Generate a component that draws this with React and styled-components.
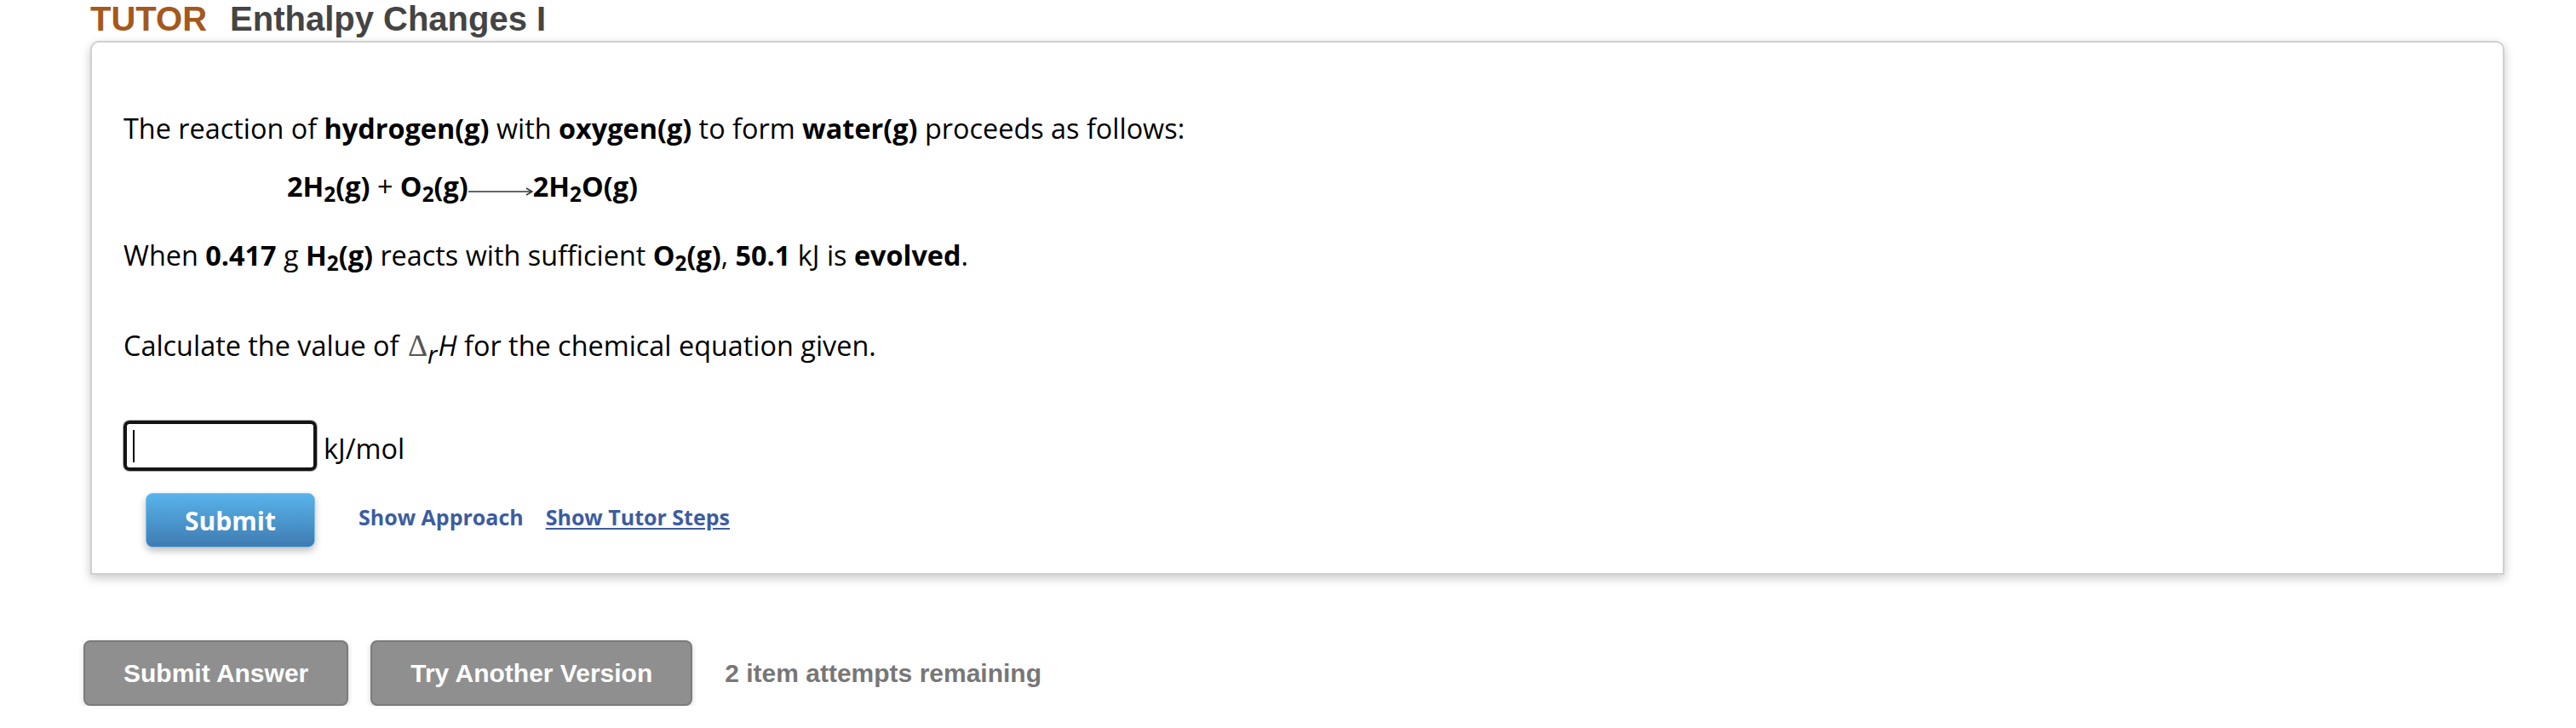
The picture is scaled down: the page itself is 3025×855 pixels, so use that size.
import React from 'react';
import styled, { createGlobalStyle } from 'styled-components';

const GlobalStyle = createGlobalStyle`
  html, body {
    margin: 0;
    padding: 0;
    background: #ffffff;
  }
  body {
    font-family: 'Open Sans', 'Liberation Sans', sans-serif;
    color: #000;
  }
`;

const Page = styled.div`
  padding: 0 84px 0 98px;
`;

const Title = styled.h1`
  margin: 0 0 3px 8px;
  font-family: 'Liberation Sans', Arial, sans-serif;
  font-size: 40px;
  line-height: 45px;
  font-weight: 700;
  color: #444444;
`;

const TitleTag = styled.span`
  color: #a5581c;
  margin-right: 27px;
`;

const Card = styled.section`
  margin-left: 8px;
  border: 2px solid #d0d0d0;
  border-radius: 10px 10px 0 0;
  background: #fff;
  box-shadow: 0 4px 12px rgba(0, 0, 0, 0.22);
  padding: 76px 40px 30px 37px;
`;

const Para = styled.p`
  margin: 0 0 ${p => p.$after || 0}px 0;
  font-size: 32.4px;
  line-height: 48px;
  white-space: nowrap;

  b {
    font-weight: 700;
  }

  sub {
    font-size: 0.75em;
    line-height: 0;
    vertical-align: baseline;
    position: relative;
    top: 0.26em;
  }
`;

const Equation = styled(Para)`
  padding-left: 192px;
  font-weight: 700;
`;

const Plus = styled.span`
  font-weight: 400;
`;

const Arrow = styled.svg`
  width: 76px;
  height: 14px;
  vertical-align: -1px;
`;

const Delta = styled.span`
  font-family: 'Liberation Serif', 'Times New Roman', serif;
  font-size: 36px;
  color: #555;
  margin-left: 2px;
`;

const Ital = styled.i`
  font-style: italic;
`;

const RateSub = styled.sub`
  && {
    font-size: 0.9em;
    top: 0.3em;
    font-style: italic;
    margin-right: 1px;
  }
`;

const AnswerRow = styled.div`
  display: flex;
  align-items: center;
  gap: 8px;
  margin-bottom: 26px;
`;

const AnswerBox = styled.div`
  box-sizing: border-box;
  width: 227px;
  height: 59px;
  border: 4px solid #141414;
  border-radius: 7px;
  box-shadow: 0 0 0 1px #b0b0b0;
  display: flex;
  align-items: center;
  padding-left: 7px;
`;

const Caret = styled.span`
  width: 2px;
  height: 38px;
  background: #000;
`;

const Unit = styled.span`
  font-size: 32.4px;
  line-height: 48px;
  margin-top: 4px;
`;

const SubmitRow = styled.div`
  display: flex;
  align-items: center;
  padding-left: 26px;
`;

const SubmitButton = styled.button`
  box-sizing: border-box;
  width: 199px;
  height: 64px;
  border: 1px solid #7fc1ef;
  border-radius: 8px;
  background: linear-gradient(to bottom, #58b3eb, #3e7bb1);
  box-shadow: 0 4px 8px rgba(0, 0, 0, 0.25);
  color: #fff;
  font-family: 'Open Sans', sans-serif;
  font-weight: 700;
  font-size: 30px;
  padding: 0;
  margin-right: 51px;
  cursor: pointer;
`;

const Links = styled.div`
  display: flex;
  gap: 26px;
  padding-bottom: 8px;
`;

const TutorLink = styled.a`
  font-size: 25px;
  line-height: 36px;
  font-weight: 700;
  color: #3c5c9f;
  text-decoration: ${p => (p.$underline ? 'underline' : 'none')};
  text-underline-offset: 3px;
  cursor: pointer;
`;

const ActionBar = styled.div`
  display: flex;
  align-items: center;
  gap: 26px;
  margin-top: 77px;
`;

const GrayButton = styled.button`
  box-sizing: border-box;
  height: 77px;
  padding: 0 45px;
  border: 2px solid #7b7b7b;
  border-radius: 8px;
  background: #8f8f8f;
  box-shadow: 0 2px 6px rgba(0, 0, 0, 0.18);
  color: #fff;
  font-family: 'Liberation Sans', Arial, sans-serif;
  font-weight: 700;
  font-size: 30px;
  cursor: pointer;
`;

const Attempts = styled.span`
  margin-left: 12px;
  font-family: 'Liberation Sans', Arial, sans-serif;
  font-weight: 700;
  font-size: 30px;
  color: #777777;
`;

export default function App() {
  return (
    <>
      <GlobalStyle />
      <Page>
        <Title>
          <TitleTag>TUTOR</TitleTag>Enthalpy Changes I
        </Title>
        <Card>
          <Para $after={20}>
            The reaction of <b>hydrogen(g)</b> with <b>oxygen(g)</b> to form <b>water(g)</b> proceeds as follows:
          </Para>
          <Equation $after={33}>
            2H<sub>2</sub>(g) <Plus>+</Plus> O<sub>2</sub>(g)
            <Arrow viewBox="0 0 76 14">
              <line x1="0" y1="7" x2="74" y2="7" stroke="#333" strokeWidth="1.6" />
              <path d="M68 3 L75 7 L68 11" fill="none" stroke="#333" strokeWidth="1.5" />
            </Arrow>
            2H<sub>2</sub>O(g)
          </Equation>
          <Para $after={58}>
            When <b>0.417</b> g <b>H<sub>2</sub>(g)</b> reacts with sufficient <b>O<sub>2</sub>(g)</b>, <b>50.1</b> kJ is <b>evolved</b>.
          </Para>
          <Para $after={64}>
            Calculate the value of <Delta>Δ</Delta><RateSub>r</RateSub><Ital>H</Ital> for the chemical equation given.
          </Para>
          <AnswerRow>
            <AnswerBox role="textbox">
              <Caret />
            </AnswerBox>
            <Unit>kJ/mol</Unit>
          </AnswerRow>
          <SubmitRow>
            <SubmitButton>Submit</SubmitButton>
            <Links>
              <TutorLink>Show Approach</TutorLink>
              <TutorLink $underline>Show Tutor Steps</TutorLink>
            </Links>
          </SubmitRow>
        </Card>
        <ActionBar>
          <GrayButton>Submit Answer</GrayButton>
          <GrayButton>Try Another Version</GrayButton>
          <Attempts>2 item attempts remaining</Attempts>
        </ActionBar>
      </Page>
    </>
  );
}
